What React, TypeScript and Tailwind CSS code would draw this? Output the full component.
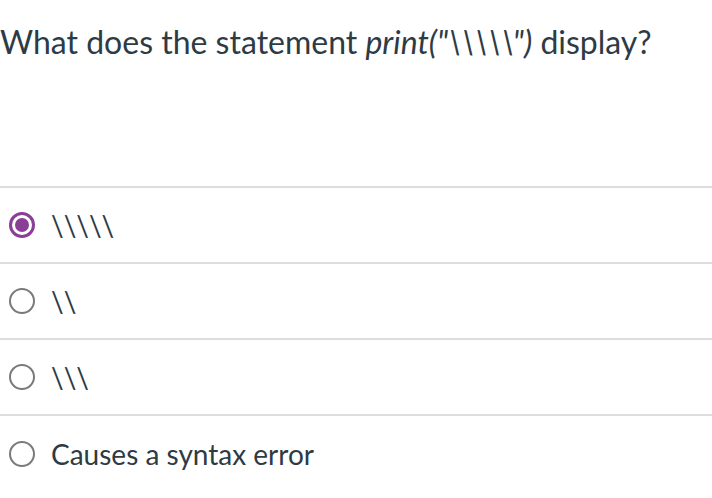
import React from "react";

const options = [
  { label: "\\\\\\\\\\", checked: true },
  { label: "\\\\", checked: false },
  { label: "\\\\\\", checked: false },
  { label: "Causes a syntax error", checked: false },
];

function Radio({ checked }: { checked: boolean }) {
  if (checked) {
    return (
      <span className="flex h-[26px] w-[26px] shrink-0 items-center justify-center rounded-full border-[3px] border-[#8a3f96] bg-white">
        <span className="h-[14px] w-[14px] rounded-full bg-[#8a3f96]" />
      </span>
    );
  }
  return <span className="h-[26px] w-[26px] shrink-0 rounded-full border-2 border-[#7a7a7a] bg-white" />;
}

export default function App() {
  return (
    <div className="h-[498px] w-[712px] overflow-hidden bg-white text-[#2d3b45]" style={{ fontFamily: "Lato, 'Noto Sans', sans-serif" }}>
      <h1 className="pt-[20px] text-[32px] font-normal leading-[44px]">
        What does the statement <em>{'print("\\\\\\\\\\")'}</em> display?
      </h1>
      <ul className="mt-[122px] border-t-2 border-[#dddddd]">
        {options.map((o) => (
          <li key={o.label} className="flex h-[76px] items-center gap-[16px] border-b-2 border-[#dddddd] pl-[9px] text-[28px] last:border-b-0">
            <Radio checked={o.checked} />
            <span>{o.label}</span>
          </li>
        ))}
      </ul>
    </div>
  );
}
